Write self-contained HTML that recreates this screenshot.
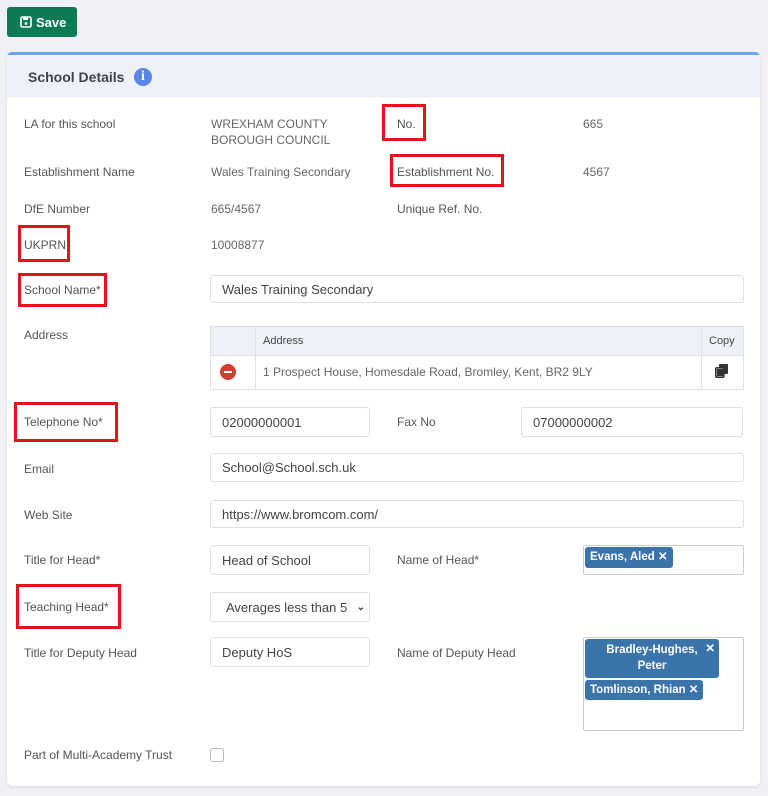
<!DOCTYPE html>
<html><head><meta charset="utf-8"><style>
*{box-sizing:border-box;margin:0;padding:0}
body{width:768px;height:796px;background:#f0f1f4;font-family:"Liberation Sans",sans-serif;position:relative;overflow:hidden;color:#555}
.a{position:absolute}
.btn{left:7px;top:7px;width:70px;height:30px;background:#0c7a55;border-radius:3px;color:#fff;font-size:13px;font-weight:bold;display:flex;align-items:center;padding-left:13px}
.card{left:7px;top:52px;width:753px;height:734px;background:#fff;border-radius:5px;border-top:3px solid #6aa3e6;box-shadow:0 1px 3px rgba(0,0,0,.1)}
.hdr{left:7px;top:55px;width:753px;height:43px;background:#eef2f8}
.lbl{font-size:12px;color:#555}
.val{font-size:12px;color:#666;line-height:16px}
.inp{border:1px solid #dde0e5;border-radius:3px;background:#fff;font-size:13px;color:#444;padding-left:11px;display:flex;align-items:center}
.red{border:3px solid #e3141c}
.tag{background:#3a74ab;color:#fff;font-size:11.5px;font-weight:bold;border-radius:3px;padding:0 5px}
</style></head><body>
<div class="a btn"><svg width="12" height="12" viewBox="0 0 12 12" style="margin-right:4px"><rect x="1" y="1" width="10" height="10" rx="1.5" fill="none" stroke="#fff" stroke-width="1.6"/><rect x="3" y="1" width="5" height="3" fill="#fff"/><circle cx="6" cy="7.5" r="1.4" fill="#fff"/></svg>Save</div>
<div class="a card"></div>
<div class="a hdr"></div>
<div class="a" style="left:28px;top:69px;font-size:14px;font-weight:bold;color:#3d4450">School Details</div>
<div class="a" style="left:134px;top:68px;width:18px;height:18px;border-radius:50%;background:#5b86e5;color:#fff;font-size:14px;font-weight:bold;text-align:center;line-height:18px;font-family:'Liberation Serif',serif">i</div>

<div class="a lbl" style="left:24px;top:117px">LA for this school</div>
<div class="a val" style="left:211px;top:116px">WREXHAM COUNTY<br>BOROUGH COUNCIL</div>
<div class="a red" style="left:382px;top:104px;width:44px;height:37px"></div>
<div class="a lbl" style="left:397px;top:117px">No.</div>
<div class="a val" style="left:583px;top:116px">665</div>

<div class="a lbl" style="left:24px;top:165px">Establishment Name</div>
<div class="a val" style="left:211px;top:164px">Wales Training Secondary</div>
<div class="a red" style="left:390px;top:154px;width:114px;height:33px"></div>
<div class="a lbl" style="left:397px;top:165px">Establishment No.</div>
<div class="a val" style="left:583px;top:164px">4567</div>

<div class="a lbl" style="left:24px;top:202px">DfE Number</div>
<div class="a val" style="left:211px;top:201px">665/4567</div>
<div class="a lbl" style="left:397px;top:202px">Unique Ref. No.</div>

<div class="a red" style="left:18px;top:225px;width:52px;height:37px"></div>
<div class="a lbl" style="left:24px;top:238px">UKPRN</div>
<div class="a val" style="left:211px;top:237px">10008877</div>

<div class="a red" style="left:18px;top:273px;width:89px;height:34px"></div>
<div class="a lbl" style="left:24px;top:283px">School Name*</div>
<div class="a inp" style="left:210px;top:275px;width:534px;height:28px">Wales Training Secondary</div>

<div class="a lbl" style="left:24px;top:328px">Address</div>
<div class="a" style="left:210px;top:326px;width:534px;height:64px;border:1px solid #dde0e5">
 <div class="a" style="left:0;top:0;width:532px;height:29px;background:#eef2f8;border-bottom:1px solid #dde0e5"></div>
 <div class="a" style="left:44px;top:0;width:1px;height:62px;background:#dde0e5"></div>
 <div class="a" style="left:490px;top:0;width:1px;height:62px;background:#dde0e5"></div>
 <div class="a" style="left:52px;top:8px;font-size:11px;color:#444">Address</div>
 <div class="a" style="left:498px;top:8px;font-size:11px;color:#444">Copy</div>
 <div class="a" style="left:9px;top:37px;width:16px;height:16px;border-radius:50%;background:#d0402f"><div class="a" style="left:4px;top:7px;width:8px;height:2px;background:#fff"></div></div>
 <div class="a" style="left:52px;top:38px;font-size:12px;color:#666">1 Prospect House, Homesdale Road, Bromley, Kent, BR2 9LY</div>
 <svg class="a" style="left:504px;top:37px" width="13" height="14" viewBox="0 0 13 14"><rect x="4" y="0" width="9" height="10" rx="1" fill="#333"/><rect x="0.8" y="3.8" width="8" height="9.4" rx="1" fill="#fff" stroke="#333" stroke-width="1.6"/><rect x="2" y="5" width="6" height="7" fill="#333"/></svg>
</div>

<div class="a red" style="left:14px;top:402px;width:104px;height:40px"></div>
<div class="a lbl" style="left:24px;top:415px">Telephone No*</div>
<div class="a inp" style="left:210px;top:407px;width:160px;height:30px">02000000001</div>
<div class="a lbl" style="left:397px;top:415px">Fax No</div>
<div class="a inp" style="left:521px;top:407px;width:222px;height:30px">07000000002</div>

<div class="a lbl" style="left:24px;top:462px">Email</div>
<div class="a inp" style="left:210px;top:453px;width:534px;height:29px">School@School.sch.uk</div>

<div class="a lbl" style="left:24px;top:508px">Web Site</div>
<div class="a inp" style="left:210px;top:500px;width:534px;height:28px">https://www.bromcom.com/</div>

<div class="a lbl" style="left:24px;top:553px">Title for Head*</div>
<div class="a inp" style="left:210px;top:545px;width:160px;height:30px">Head of School</div>
<div class="a lbl" style="left:397px;top:553px">Name of Head*</div>
<div class="a" style="left:583px;top:545px;width:161px;height:30px;border:1px solid #ccc;border-radius:2px"></div>
<div class="a tag" style="left:585px;top:547px;height:21px;line-height:21px">Evans, Aled ✕</div>

<div class="a red" style="left:16px;top:584px;width:105px;height:45px"></div>
<div class="a lbl" style="left:24px;top:600px">Teaching Head*</div>
<div class="a inp" style="left:210px;top:592px;width:160px;height:30px;padding-left:15px">Averages less than 5<span style="position:absolute;right:4px;font-size:10px;font-weight:bold">&#x2304;</span></div>

<div class="a lbl" style="left:24px;top:646px">Title for Deputy Head</div>
<div class="a inp" style="left:210px;top:637px;width:160px;height:30px">Deputy HoS</div>
<div class="a lbl" style="left:397px;top:646px">Name of Deputy Head</div>
<div class="a" style="left:583px;top:637px;width:161px;height:94px;border:1px solid #ccc;border-radius:2px"></div>
<div class="a tag" style="left:585px;top:639px;width:134px;height:39px;text-align:center;line-height:16px;padding-top:3px">Bradley-Hughes,<br>Peter<span style="position:absolute;right:4px;top:2px">✕</span></div>
<div class="a tag" style="left:585px;top:680px;height:20px;line-height:20px">Tomlinson, Rhian ✕</div>

<div class="a lbl" style="left:24px;top:748px">Part of Multi-Academy Trust</div>
<div class="a" style="left:210px;top:748px;width:14px;height:14px;border:1px solid #bbb;border-radius:3px"></div>
</body></html>
